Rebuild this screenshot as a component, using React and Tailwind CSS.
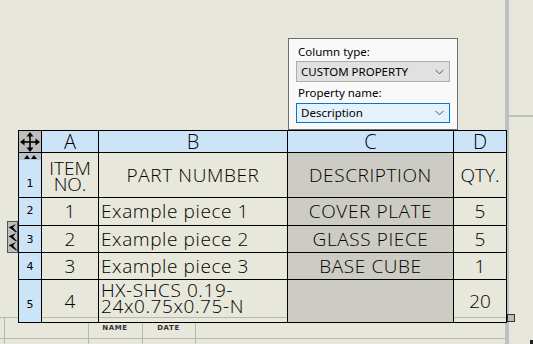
import React from "react";

const tf = { fontFamily: '"Open Sans", "DejaVu Sans", sans-serif' };

function MoveIcon() {
  return (
    <svg width="20" height="20" viewBox="0 0 20 20">
      <line x1="10" y1="3" x2="10" y2="17" stroke="#000" strokeWidth="1.6" />
      <line x1="3" y1="10" x2="17" y2="10" stroke="#000" strokeWidth="1.6" />
      <polygon points="10,0 6.5,4.5 13.5,4.5" fill="#000" />
      <polygon points="10,20 6.5,15.5 13.5,15.5" fill="#000" />
      <polygon points="0,10 4.5,6.5 4.5,13.5" fill="#000" />
      <polygon points="20,10 15.5,6.5 15.5,13.5" fill="#000" />
    </svg>
  );
}

function Chevron() {
  return (
    <svg width="9" height="6" viewBox="0 0 9 6">
      <polyline points="0.5,0.8 4.5,4.8 8.5,0.8" fill="none" stroke="#555" strokeWidth="1" />
    </svg>
  );
}

function LeftHandle() {
  return (
    <svg width="9" height="30" viewBox="0 0 9 30">
      {[2, 11, 20].map((y) => (
        <g key={y}>
          <polygon points={`0.5,${y + 3.5} 8,${y} 5,${y + 3.5} 8,${y + 7}`} fill="#000" />
          <line x1="4" y1={y + 5} x2="8.5" y2={y + 8} stroke="#000" strokeWidth="1.2" />
        </g>
      ))}
    </svg>
  );
}

const line5 =
  "bg-[linear-gradient(to_bottom,transparent_37px,#b9b9b4_37px,#b9b9b4_38px,transparent_38px)]";

export default function App() {
  const cell = "bg-[#e7e7db] flex items-center justify-center text-[19px] font-light text-black";
  const cCell = "bg-[#cdccc4] flex items-center justify-center text-[19px] font-light text-black";
  const head = "bg-[#cce4f7] flex items-center justify-center text-[20px] font-light text-black leading-none";
  const num = "bg-[#cce4f7] flex justify-center text-[11px] text-black";
  const numFont = { fontFamily: '"DejaVu Sans", Tahoma, sans-serif' };

  return (
    <div className="relative w-[533px] h-[344px] overflow-hidden bg-[#e7e7db]">
      {/* right drawing-sheet border */}
      <div className="absolute left-[505px] top-0 w-[4px] h-[344px] bg-[#c0c0c0]" />
      <div className="absolute left-[509px] top-[115px] w-[24px] h-[2px] bg-[#c0c0c0]" />
      <div className="absolute left-[530px] top-[340px] w-[3px] h-[4px] bg-[#222]" />

      {/* title block */}
      <div className="absolute left-0 top-[317px] w-[505px] h-px bg-[#b9b9b4]" />
      <div className="absolute left-0 top-[338px] w-[505px] h-px bg-[#b9b9b4]" />
      <div className="absolute left-[4px] top-[317px] w-px h-[27px] bg-[#b9b9b4]" />
      <div className="absolute left-[88px] top-[317px] w-px h-[27px] bg-[#b9b9b4]" />
      <div className="absolute left-[142px] top-[317px] w-px h-[27px] bg-[#b9b9b4]" />
      <div className="absolute left-[195px] top-[317px] w-px h-[27px] bg-[#b9b9b4]" />
      <div
        className="absolute left-[88px] top-[318px] w-[54px] h-[20px] flex items-center justify-center text-[7px] font-bold tracking-[0.6px] text-[#333]"
        style={{ fontFamily: '"DejaVu Sans", sans-serif' }}
      >
        NAME
      </div>
      <div
        className="absolute left-[142px] top-[318px] w-[53px] h-[20px] flex items-center justify-center text-[7px] font-bold tracking-[0.6px] text-[#333]"
        style={{ fontFamily: '"DejaVu Sans", sans-serif' }}
      >
        DATE
      </div>

      {/* table */}
      <div className="absolute left-[18px] top-[130px]">
        <div
          className="grid grid-cols-[22px_56px_188px_165px_52px] grid-rows-[21px_44px_27px_26px_26px_42px] gap-px bg-black border border-black"
          style={tf}
        >
          {/* header row */}
          <div className="bg-[#bdbdbd] flex items-center justify-center">
            <MoveIcon />
          </div>
          <div className={head}>A</div>
          <div className={head}>B</div>
          <div className={head}>C</div>
          <div className={head}>D</div>

          {/* row 1 */}
          <div className="bg-[#cce4f7] flex flex-col">
            <div className="h-[7px] bg-[#b8c3cc] flex items-center justify-center gap-px">
              <span className="w-0 h-0 border-l-[3px] border-r-[3px] border-b-[4px] border-l-transparent border-r-transparent border-b-black" />
              <span className="w-0 h-0 border-l-[3px] border-r-[3px] border-b-[4px] border-l-transparent border-r-transparent border-b-black" />
            </div>
            <div className="flex-1 flex items-end justify-center pb-[5px] text-[11px]" style={numFont}>1</div>
          </div>
          <div className={`${cell} flex-col pt-[2px]`}>
            <span className="leading-[16px] h-[16px]">ITEM</span>
            <span className="leading-[16px] h-[16px]">NO.</span>
          </div>
          <div className={`${cell} tracking-[0.6px]`}>PART NUMBER</div>
          <div className={`${cCell} tracking-[0.6px]`}>DESCRIPTION</div>
          <div className={cell}>QTY.</div>

          {/* row 2 */}
          <div className={`${num} items-center`} style={numFont}>2</div>
          <div className={cell}>1</div>
          <div className={`${cell} justify-start pl-[2px] tracking-[0.6px]`}>Example piece 1</div>
          <div className={`${cCell} tracking-[0.6px]`}>COVER PLATE</div>
          <div className={cell}>5</div>

          {/* row 3 */}
          <div className={`${num} items-center pt-[2px]`} style={numFont}>3</div>
          <div className={cell}>2</div>
          <div className={`${cell} justify-start pl-[2px] tracking-[0.6px]`}>Example piece 2</div>
          <div className={`${cCell} tracking-[0.6px]`}>GLASS PIECE</div>
          <div className={cell}>5</div>

          {/* row 4 */}
          <div className={`${num} items-center pt-[2px]`} style={numFont}>4</div>
          <div className={cell}>3</div>
          <div className={`${cell} justify-start pl-[2px] tracking-[0.6px]`}>Example piece 3</div>
          <div className={`${cCell} tracking-[0.6px]`}>BASE CUBE</div>
          <div className={cell}>1</div>

          {/* row 5 */}
          <div className={`${num} items-center pt-[8px]`} style={numFont}>5</div>
          <div className={`${cell} ${line5}`}>4</div>
          <div className={`${cell} ${line5} flex-col items-start justify-start pl-[2px] tracking-[0.6px] pt-[2px]`}>
            <span className="leading-[16px] h-[16px]">HX-SHCS 0.19-</span>
            <span className="leading-[16px] h-[16px]">24x0.75x0.75-N</span>
          </div>
          <div className={cCell}></div>
          <div className={`${cell} ${line5}`}>20</div>
        </div>
      </div>

      {/* resize corner */}
      <div className="absolute left-[507px] top-[314px] w-[8px] h-[8px] bg-[#bdbdbd] border border-[#333]" />

      {/* left row-drag handle */}
      <div className="absolute left-[7px] top-[221px] w-[11px] h-[32px] bg-[#bdbdbd] border border-[#555] flex items-center justify-center">
        <LeftHandle />
      </div>

      {/* column popup */}
      <div
        className="absolute left-[288px] top-[38px] w-[170px] h-[92px] bg-[#f9f9f9] border border-[#6e6e6e] px-[7px] pt-[3px] text-[11.5px] text-black"
        style={{ fontFamily: '"Noto Sans", "Open Sans", sans-serif' }}
      >
        <div className="h-[19px] leading-[19px] pl-[2px]">Column type:</div>
        <div className="h-[21px] bg-[#e1e1e1] border border-[#adadad] flex items-center justify-between pl-[4px] pr-[5px]">
          <span>CUSTOM PROPERTY</span>
          <Chevron />
        </div>
        <div className="h-[21px] leading-[21px] pl-[2px]">Property name:</div>
        <div className="h-[20px] bg-[#e5f1fb] border border-[#0078d7] flex items-center justify-between pl-[4px] pr-[5px]">
          <span>Description</span>
          <Chevron />
        </div>
      </div>
    </div>
  );
}
